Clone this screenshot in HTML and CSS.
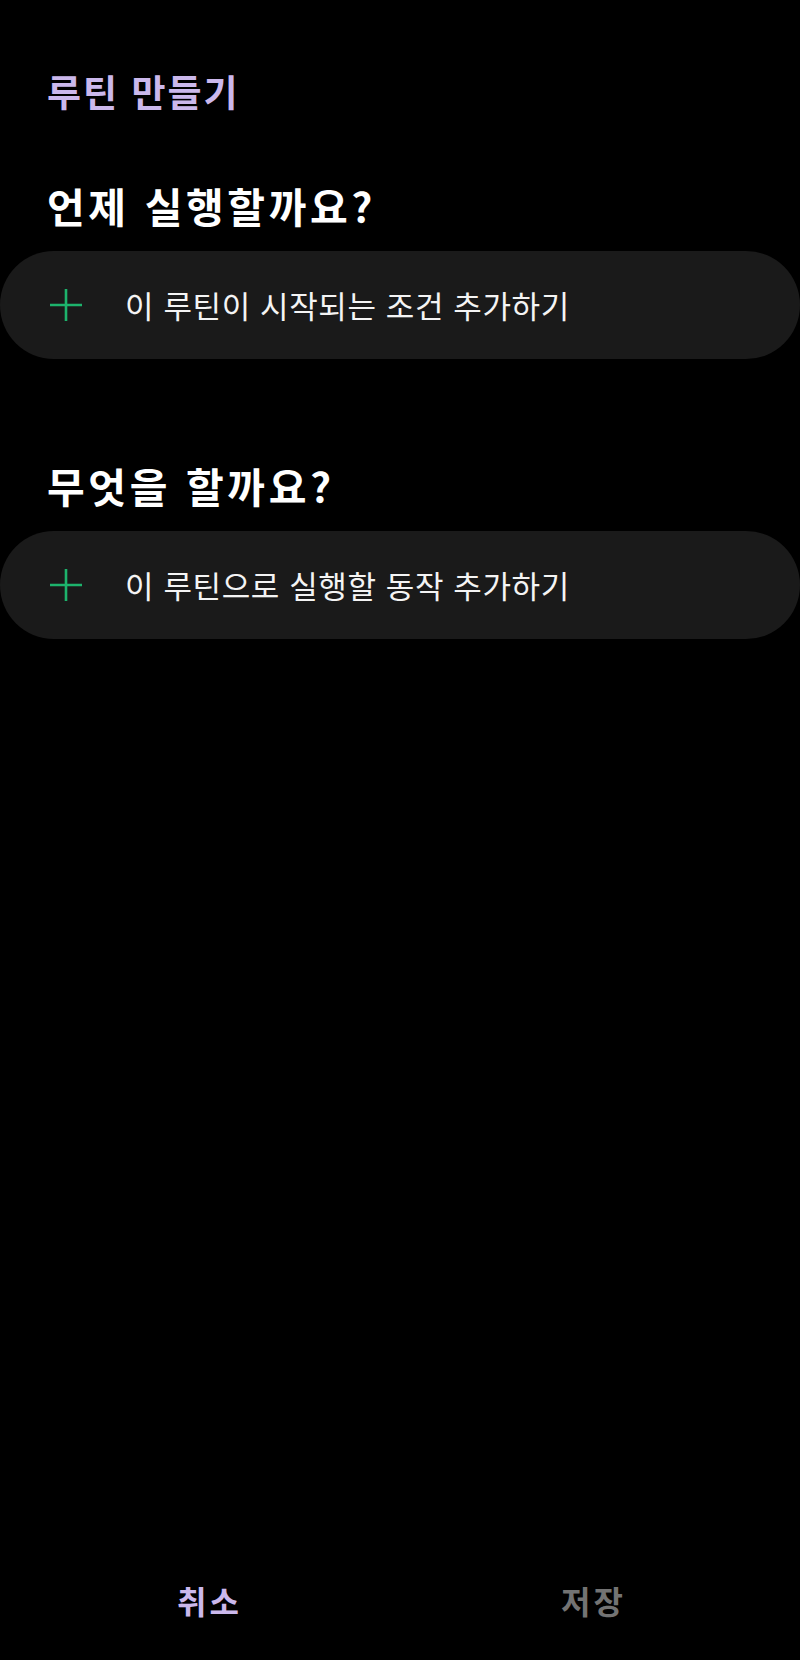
FILE: index.html
```html
<!DOCTYPE html>
<html lang="ko">
<head>
<meta charset="utf-8">
<title>루틴 만들기</title>
<link rel="stylesheet" href="styles.css">
</head>
<body>
<div class="page">
  <h1 class="title">루틴 만들기</h1>

  <h2 class="heading heading-first">언제 실행할까요?</h2>
  <div class="pill">
    <svg class="plus" viewBox="0 0 32 32" width="32" height="32" aria-hidden="true">
      <path d="M16 0V32M0 16H32" stroke="#1db36c" stroke-width="2.6" fill="none"/>
    </svg>
    <span class="pill-text">이 루틴이 시작되는 조건 추가하기</span>
  </div>

  <h2 class="heading heading-second">무엇을 할까요?</h2>
  <div class="pill">
    <svg class="plus" viewBox="0 0 32 32" width="32" height="32" aria-hidden="true">
      <path d="M16 0V32M0 16H32" stroke="#1db36c" stroke-width="2.6" fill="none"/>
    </svg>
    <span class="pill-text">이 루틴으로 실행할 동작 추가하기</span>
  </div>

  <div class="bottom-bar">
    <button class="bar-btn cancel">취소</button>
    <button class="bar-btn save">저장</button>
  </div>
</div>
</body>
</html>
```

FILE: styles.css
```css
html, body {
  margin: 0;
  padding: 0;
  background: #000;
}

body {
  font-family: "Noto Sans CJK KR", "Noto Sans", sans-serif;
  color: #fff;
}

.page {
  display: flex;
  flex-direction: column;
  width: 800px;
  height: 1660px;
  box-sizing: border-box;
}

.title {
  margin: 73px 0 0 0;
  padding-left: 47px;
  font-size: 37px;
  line-height: 36px;
  font-weight: 700;
  color: #cbb8ec;
  letter-spacing: 2px;
}

.heading {
  margin: 0;
  padding-left: 47px;
  font-size: 41px;
  line-height: 40px;
  font-weight: 700;
  color: #fff;
  letter-spacing: 3.6px;
}

.heading-first {
  margin-top: 76px;
}

.heading-second {
  margin-top: 106px;
}

.pill {
  display: flex;
  align-items: center;
  gap: 43px;
  height: 108px;
  margin-top: 26px;
  padding-left: 50px;
  background: #1a1a1a;
  border-radius: 54px;
  box-sizing: border-box;
}

.plus {
  flex: none;
  display: block;
}

.pill-text {
  font-size: 31px;
  line-height: 36px;
  letter-spacing: 0.6px;
  color: #f4f4f4;
}

.bottom-bar {
  display: flex;
  margin-top: auto;
  margin-bottom: 20px;
  padding: 0 16px;
  height: 80px;
}

.bar-btn {
  flex: 1;
  background: none;
  border: none;
  padding: 0;
  font-family: "Noto Sans CJK KR", "Noto Sans", sans-serif;
  font-size: 32px;
  line-height: 31px;
  font-weight: 700;
  letter-spacing: 3px;
  text-indent: 3px;
}

.cancel {
  color: #cbb8ec;
}

.save {
  color: #737373;
}
```
